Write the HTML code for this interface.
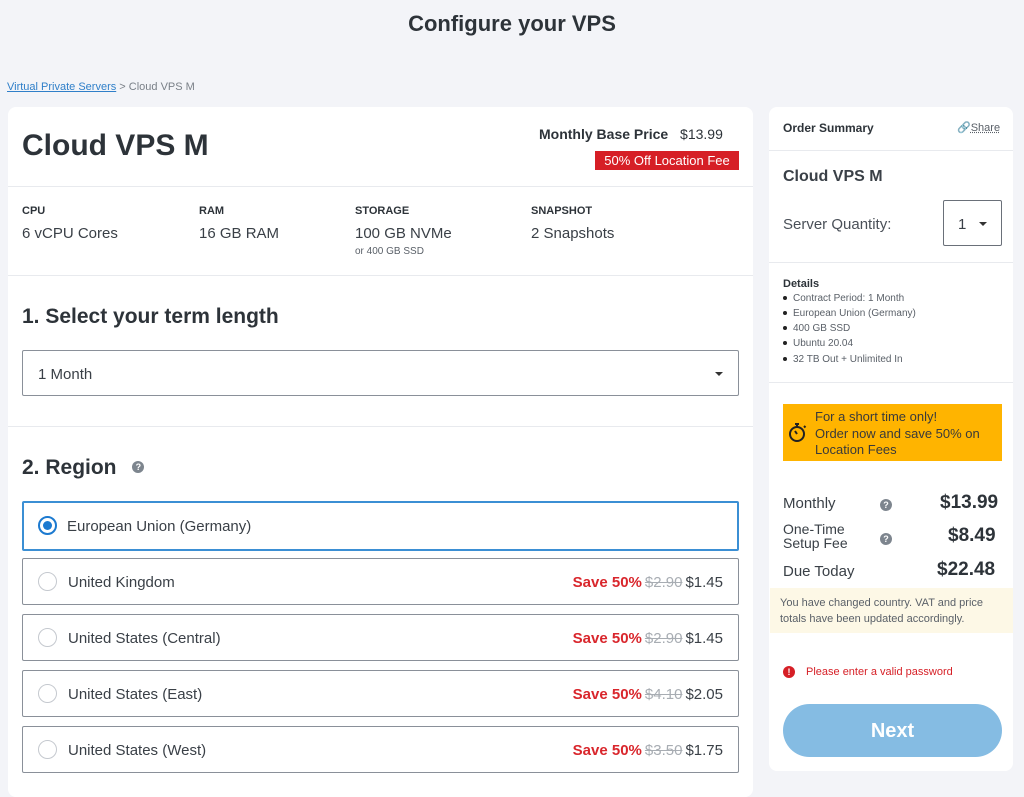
<!DOCTYPE html>
<html><head><style>
*{box-sizing:border-box;margin:0;padding:0}
body{width:1024px;height:779px;overflow:hidden;background:#f3f4f8;font-family:"Liberation Sans",sans-serif;color:#2d3339;position:relative}
.a{position:absolute}
.card{position:absolute;background:#fff;border-radius:8px}
.hr{position:absolute;height:1px;background:#e8eaee}
.opt{position:absolute;left:22px;width:717px;height:47px;border:1px solid #8a9099;border-radius:2px;background:#fff}
.opt .r{position:absolute;left:15px;top:13px;width:19px;height:19px;border:1px solid #c5c9cf;border-radius:50%}
.opt .n{position:absolute;left:45px;top:15px;font-size:15px;color:#3a4047}
.opt .p{position:absolute;right:15px;top:15px;font-size:15px;color:#3a4047}
.opt .p b{color:#d9262c}
.opt .p s{color:#a8adb3;margin:0 3px}
.lbl{font-size:11px;font-weight:bold;color:#2d3339}
.val{font-size:15px;color:#3a4047}
.q{display:inline-block;width:12px;height:12px;border-radius:50%;background:#7d858e;color:#fff;font-size:9px;font-weight:bold;text-align:center;line-height:12px}
.li{font-size:10px;color:#5a6068;position:absolute;left:785px}
.li:before{content:"";display:inline-block;width:4px;height:4px;background:#222;border-radius:50%;margin-right:6px;vertical-align:middle}
</style></head><body>
<div class="a" style="left:0;width:1024px;top:11px;text-align:center;font-size:22px;font-weight:bold">Configure your VPS</div>
<div class="a" style="left:7px;top:81px;font-size:11px;color:#7a8088"><span style="color:#2f7fc9;text-decoration:underline">Virtual Private Servers</span> &gt; Cloud VPS M</div>

<div class="card" style="left:8px;top:107px;width:745px;height:690px"></div>
<div class="a" style="left:22px;top:129px;font-size:30px;font-weight:bold">Cloud VPS M</div>
<div class="a" style="left:539px;top:126px;font-size:14px;font-weight:bold">Monthly Base Price <span style="font-weight:normal;margin-left:8px">$13.99</span></div>
<div class="a" style="left:595px;top:151px;width:144px;height:19px;background:#d61f26;color:#fff;font-size:13px;text-align:center;line-height:19px">50% Off Location Fee</div>
<div class="hr" style="left:8px;width:745px;top:186px"></div>
<div class="a lbl" style="left:22px;top:205px">CPU</div><div class="a val" style="left:22px;top:225px">6 vCPU Cores</div>
<div class="a lbl" style="left:199px;top:205px">RAM</div><div class="a val" style="left:199px;top:225px">16 GB RAM</div>
<div class="a lbl" style="left:355px;top:205px">STORAGE</div><div class="a val" style="left:355px;top:225px">100 GB NVMe</div>
<div class="a" style="left:355px;top:246px;font-size:10px;color:#5a6068">or 400 GB SSD</div>
<div class="a lbl" style="left:531px;top:205px">SNAPSHOT</div><div class="a val" style="left:531px;top:225px">2 Snapshots</div>
<div class="hr" style="left:8px;width:745px;top:275px"></div>
<div class="a" style="left:22px;top:305px;font-size:21px;font-weight:bold">1. Select your term length</div>
<div class="a" style="left:22px;top:350px;width:717px;height:46px;border:1px solid #8a9099;border-radius:2px"></div>
<div class="a val" style="left:38px;top:366px">1 Month</div>
<div class="a" style="left:715px;top:372px;border:4px solid transparent;border-top:4px solid #333"></div>
<div class="hr" style="left:8px;width:745px;top:426px"></div>
<div class="a" style="left:22px;top:456px;font-size:21px;font-weight:bold">2. Region <span class="q" style="margin-left:10px;vertical-align:4px">?</span></div>

<div class="opt" style="top:501px;height:50px;border:2px solid #3b8fd4"><div class="r" style="border:2px solid #1c7ad0;left:14px;top:13px"><div style="margin:3px;width:9px;height:9px;border-radius:50%;background:#1c7ad0"></div></div><div class="n" style="left:43px;top:15px">European Union (Germany)</div></div>
<div class="opt" style="top:558px"><div class="r"></div><div class="n">United Kingdom</div><div class="p"><b>Save 50%</b><s>$2.90</s>$1.45</div></div>
<div class="opt" style="top:614px"><div class="r"></div><div class="n">United States (Central)</div><div class="p"><b>Save 50%</b><s>$2.90</s>$1.45</div></div>
<div class="opt" style="top:670px"><div class="r"></div><div class="n">United States (East)</div><div class="p"><b>Save 50%</b><s>$4.10</s>$2.05</div></div>
<div class="opt" style="top:726px"><div class="r"></div><div class="n">United States (West)</div><div class="p"><b>Save 50%</b><s>$3.50</s>$1.75</div></div>

<div class="card" style="left:769px;top:107px;width:244px;height:664px"></div>
<div class="a" style="left:783px;top:121px;font-size:12px;font-weight:bold">Order Summary</div>
<div class="a" style="left:957px;top:121px;font-size:11px;color:#5a6068">&#128279;<span style="text-decoration:underline dotted">Share</span></div>
<div class="hr" style="left:769px;width:244px;top:150px"></div>
<div class="a" style="left:783px;top:168px;font-size:16px;font-weight:bold;color:#3a4047">Cloud VPS M</div>
<div class="a" style="left:783px;top:216px;font-size:15px;color:#4a5058">Server Quantity:</div>
<div class="a" style="left:943px;top:200px;width:59px;height:46px;border:1px solid #6a7079;border-radius:2px"></div>
<div class="a" style="left:958px;top:216px;font-size:15px;color:#3a4047">1</div>
<div class="a" style="left:979px;top:222px;border:4px solid transparent;border-top:4px solid #333"></div>
<div class="hr" style="left:769px;width:244px;top:262px"></div>
<div class="a" style="left:783px;top:278px;font-size:11px;font-weight:bold">Details</div>
<div class="li" style="top:293px;left:783px">Contract Period: 1 Month</div>
<div class="li" style="top:308px;left:783px">European Union (Germany)</div>
<div class="li" style="top:323px;left:783px">400 GB SSD</div>
<div class="li" style="top:338px;left:783px">Ubuntu 20.04</div>
<div class="li" style="top:354px;left:783px">32 TB Out + Unlimited In</div>
<div class="hr" style="left:769px;width:244px;top:382px"></div>
<div class="a" style="left:783px;top:404px;width:219px;height:57px;background:#ffb400"></div>
<svg class="a" style="left:788px;top:422px" width="20" height="22" viewBox="0 0 20 22"><circle cx="9" cy="12" r="7" fill="none" stroke="#222" stroke-width="2"/><path d="M7 2h4M9 2v3M9 12l-2-3M16 4l1.5 1.5" stroke="#222" stroke-width="2" fill="none"/></svg>
<div class="a" style="left:815px;top:409px;font-size:13px;line-height:16.5px;color:#3a3a3a">For a short time only!<br>Order now and save 50% on<br>Location Fees</div>
<div class="a" style="left:783px;top:495px;font-size:15px;color:#3a4047">Monthly</div>
<div class="a" style="left:880px;top:495px"><span class="q">?</span></div>
<div class="a" style="left:940px;top:492px;font-size:19px;font-weight:bold">$13.99</div>
<div class="a" style="left:783px;top:522px;font-size:14px;line-height:14px;color:#3a4047">One-Time<br>Setup Fee</div>
<div class="a" style="left:880px;top:529px"><span class="q">?</span></div>
<div class="a" style="left:948px;top:525px;font-size:19px;font-weight:bold">$8.49</div>
<div class="a" style="left:783px;top:563px;font-size:15px;color:#3a4047">Due Today</div>
<div class="a" style="left:937px;top:559px;font-size:19px;font-weight:bold">$22.48</div>
<div class="a" style="left:770px;top:588px;width:243px;height:45px;background:#fdf8e6"></div>
<div class="a" style="left:780px;top:595px;font-size:11px;line-height:16px;color:#5a6068">You have changed country. VAT and price<br>totals have been updated accordingly.</div>
<div class="a" style="left:783px;top:666px;width:12px;height:12px;border-radius:50%;background:#d61f26;color:#fff;font-size:9px;font-weight:bold;text-align:center;line-height:12px">!</div>
<div class="a" style="left:806px;top:666px;font-size:11px;color:#d61f26">Please enter a valid password</div>
<div class="a" style="left:783px;top:704px;width:219px;height:53px;border-radius:27px;background:#85bce3;color:#fff;font-size:20px;font-weight:bold;text-align:center;line-height:55px">Next</div>
</body></html>
